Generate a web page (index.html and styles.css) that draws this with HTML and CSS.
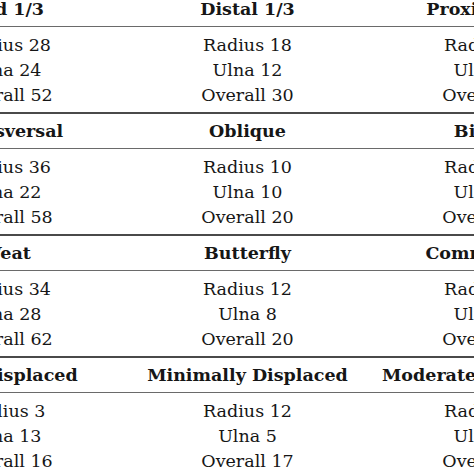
FILE: index.html
```html
<!DOCTYPE html>
<html>
<head>
<meta charset="utf-8">
<link rel="stylesheet" href="styles.css">
</head>
<body>
<div class="table">
  <div class="head"><div>Mid 1/3</div><div>Distal 1/3</div><div>Proximal 1/3</div></div>
  <div class="data">
    <div><p>Radius 28</p><p>Ulna 24</p><p>Overall 52</p></div>
    <div><p>Radius 18</p><p>Ulna 12</p><p>Overall 30</p></div>
    <div><p>Radius 20</p><p>Ulna 14</p><p>Overall 34</p></div>
  </div>
  <div class="head"><div>Transversal</div><div>Oblique</div><div>Bifocal</div></div>
  <div class="data">
    <div><p>Radius 36</p><p>Ulna 22</p><p>Overall 58</p></div>
    <div><p>Radius 10</p><p>Ulna 10</p><p>Overall 20</p></div>
    <div><p>Radius 14</p><p>Ulna 12</p><p>Overall 26</p></div>
  </div>
  <div class="head"><div>Weat</div><div>Butterfly</div><div>Comminuted</div></div>
  <div class="data">
    <div><p>Radius 34</p><p>Ulna 28</p><p>Overall 62</p></div>
    <div><p>Radius 12</p><p>Ulna 8</p><p>Overall 20</p></div>
    <div><p>Radius 16</p><p>Ulna 12</p><p>Overall 28</p></div>
  </div>
  <div class="head"><div>Non Displaced</div><div>Minimally Displaced</div><div>Moderately Displaced</div></div>
  <div class="data">
    <div><p>Radius 3</p><p>Ulna 13</p><p>Overall 16</p></div>
    <div><p>Radius 12</p><p>Ulna 5</p><p>Overall 17</p></div>
    <div><p>Radius 18</p><p>Ulna 14</p><p>Overall 32</p></div>
  </div>
</div>
</body>
</html>
```
FILE: styles.css
```css
html, body {
  margin: 0;
  padding: 0;
  background: #ffffff;
  overflow: hidden;
}
body {
  width: 474px;
  height: 474px;
  font-family: "DejaVu Serif", "Liberation Serif", serif;
  color: #161616;
}
.table {
  width: 723px;
  margin-left: -114px;
  margin-top: -8px;
}
.head, .data {
  display: grid;
  grid-template-columns: 241px 241px 241px;
  text-align: center;
}
.head {
  height: 34px;
  border-bottom: 1px solid #6a6a6a;
  align-items: center;
  font-weight: bold;
  font-size: 17.5px;
  white-space: nowrap;
}
.data {
  height: 79px;
  padding-top: 6px;
  border-bottom: 2px solid #4a4a4a;
  font-size: 17.5px;
}
.data p {
  margin: 0;
  height: 25px;
  line-height: 25px;
  white-space: nowrap;
}
```
